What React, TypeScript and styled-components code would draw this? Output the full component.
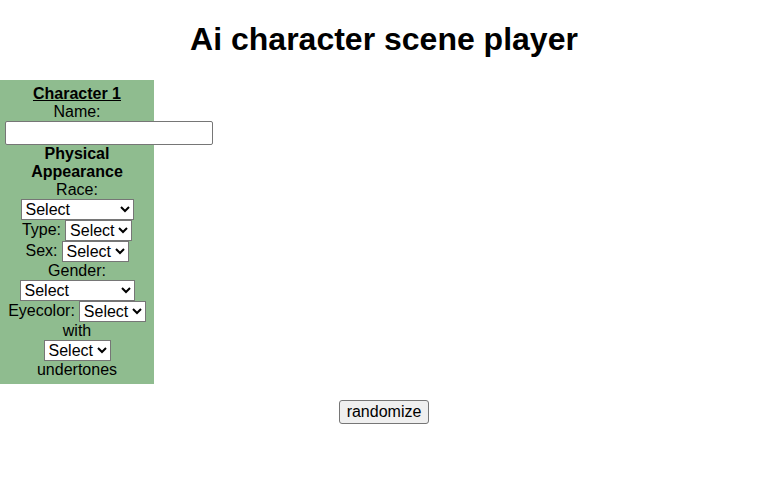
import React from "react";
import styled, { createGlobalStyle } from "styled-components";

const GlobalStyle = createGlobalStyle`
  body {
    margin: 0;
    font-family: "Liberation Sans", Arial, sans-serif;
    background: #ffffff;
    color: #000000;
  }
`;

const Title = styled.h1`
  margin: 21.44px 0;
  font-size: 32px;
  line-height: 37px;
  text-align: center;
`;

const Panel = styled.div`
  width: 154px;
  box-sizing: border-box;
  padding: 5px 5px 5px;
  background: #8fbc8f;
  text-align: center;
  font-size: 16px;
  line-height: 18px;
`;

const Heading = styled.div<{ underline?: boolean }>`
  font-weight: 700;
  text-decoration: ${(props) => (props.underline ? "underline" : "none")};
`;

const Line = styled.div``;

const Row = styled.div`
  display: flex;
  justify-content: center;
  align-items: center;
  gap: 4px;
  height: 21px;
`;

const NameInput = styled.input`
  display: block;
  box-sizing: border-box;
  width: 208px;
  height: 24px;
  margin: 0;
  font-size: 16px;
  border: 1px solid #767676;
  border-radius: 2px;
  background: #fff;
`;

const Select = styled.select<{ width?: number }>`
  width: ${(props) => (props.width ? `${props.width}px` : "auto")};
  height: 21px;
  margin: 0;
  font-family: "Liberation Sans", Arial, sans-serif;
  font-size: 16px;
  color: #000;
  background: #fff;
  border: 1px solid #767676;
  border-radius: 0;
`;

const ButtonRow = styled.div`
  display: flex;
  justify-content: center;
  margin-top: 16px;
`;

const Button = styled.button`
  height: 24px;
  padding: 1px 7px;
  font-family: "Liberation Sans", Arial, sans-serif;
  font-size: 16px;
  color: #000;
  background: #efefef;
  border: 1px solid #767676;
  border-radius: 3px;
`;

const Choice: React.FC<{ width?: number }> = ({ width }) => (
  <Select width={width} defaultValue="">
    <option value="">Select</option>
  </Select>
);

export default function App() {
  return (
    <>
      <GlobalStyle />
      <Title>Ai character scene player</Title>
      <Panel>
        <Heading underline>Character 1</Heading>
        <Line>Name:</Line>
        <NameInput type="text" />
        <Heading>Physical Appearance</Heading>
        <Line>Race:</Line>
        <Row>
          <Choice width={113} />
        </Row>
        <Row>
          Type: <Choice />
        </Row>
        <Row>
          Sex: <Choice />
        </Row>
        <Line>Gender:</Line>
        <Row>
          <Choice width={115} />
        </Row>
        <Row>
          Eyecolor: <Choice />
        </Row>
        <Line>with</Line>
        <Row>
          <Choice />
        </Row>
        <Line>undertones</Line>
      </Panel>
      <ButtonRow>
        <Button>randomize</Button>
      </ButtonRow>
    </>
  );
}
